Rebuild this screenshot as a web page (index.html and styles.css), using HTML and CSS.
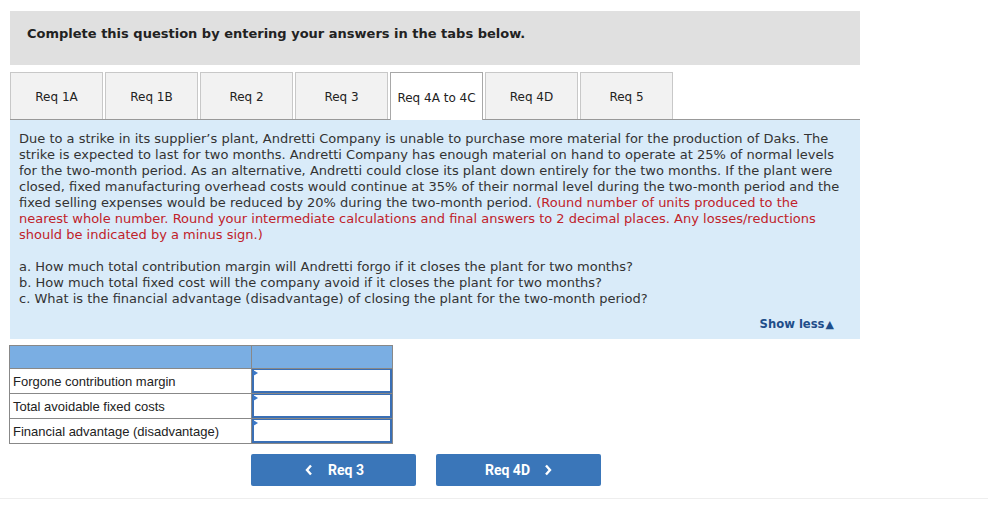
FILE: index.html
```html
<!doctype html>
<html lang="en">
<head>
	<meta charset="UTF-8">
	<title>Req 4A to 4C</title>
<link rel="stylesheet" href="styles.css">
</head>
<body>

<div class="page">
	<div class="intro">Complete this question by entering your answers in the tabs below.</div>

	<ul class="tabs">
		<li>Req 1A</li>
		<li>Req 1B</li>
		<li>Req 2</li>
		<li>Req 3</li>
		<li class="active">Req 4A to 4C</li>
		<li>Req 4D</li>
		<li>Req 5</li>
	</ul>

	<section class="question">
		<p>Due to a strike in its supplier’s plant, Andretti Company is unable to purchase more material for the production of Daks. The strike is expected to last for two months. Andretti Company has enough material on hand to operate at 25% of normal levels for the two-month period. As an alternative, Andretti could close its plant down entirely for the two months. If the plant were closed, fixed manufacturing overhead costs would continue at 35% of their normal level during the two-month period and the fixed selling expenses would be reduced by 20% during the two-month period. <span class="note">(Round number of units produced to the nearest whole number. Round your intermediate calculations and final answers to 2 decimal places. Any losses/reductions should be indicated by a minus sign.)</span></p>

		<ol class="parts">
			<li>a. How much total contribution margin will Andretti forgo if it closes the plant for two months?</li>
			<li>b. How much total fixed cost will the company avoid if it closes the plant for two months?</li>
			<li>c. What is the financial advantage (disadvantage) of closing the plant for the two-month period?</li>
		</ol>

		<div class="toggle"><a href="#">Show less<span class="caret">&#9650;</span></a></div>
	</section>

	<table class="answers">
		<tr class="head"><th></th><th></th></tr>
		<tr>
			<td class="label">Forgone contribution margin</td>
			<td class="cell"><input type="text"></td>
		</tr>
		<tr>
			<td class="label">Total avoidable fixed costs</td>
			<td class="cell"><input type="text"></td>
		</tr>
		<tr>
			<td class="label">Financial advantage (disadvantage)</td>
			<td class="cell"><input type="text"></td>
		</tr>
	</table>

	<div class="nav">
		<button class="prev"><svg class="chev" width="8" height="12" viewBox="0 0 8 12"><polyline points="6,1.5 2,6 6,10.5" fill="none" stroke="#fff" stroke-width="2.4"/></svg>Req 3</button>
		<button class="next">Req 4D<svg class="chev" width="8" height="12" viewBox="0 0 8 12"><polyline points="2,1.5 6,6 2,10.5" fill="none" stroke="#fff" stroke-width="2.4"/></svg></button>
	</div>
</div>

<div class="footer-line"></div>

</body>
</html>
```

FILE: styles.css
```css
body {
	margin: 0;
	font-family: "DejaVu Sans", Verdana, sans-serif;
	color: #333;
	background: #fff;
}
.page {
	padding: 11px 0 0 10px;
	width: 850px;
}
.intro {
	background: #e0e0e0;
	height: 54px;
	box-sizing: border-box;
	padding: 15px 17px 0;
	font-size: 13px;
	font-weight: bold;
	color: #222;
}

.tabs {
	list-style: none;
	margin: 7px 0 0 0;
	padding: 0;
	display: flex;
	gap: 2px;
	border-bottom: 1px solid #999;
	height: 47px;
}
.tabs li {
	width: 93px;
	box-sizing: border-box;
	height: 47px;
	padding-top: 2px;
	background: #f2f2f2;
	border: 1px solid #c8c8c8;
	border-bottom: 0;
	font-size: 12px;
	color: #222;
	display: flex;
	align-items: center;
	justify-content: center;
}
.tabs li.active {
	background: #fff;
	border-color: #a8a8a8;
	height: 48px;
}

.question {
	background: #d9ebf9;
	padding: 11px 9px 6px 9px;
	font-size: 13px;
	line-height: 16px;
	color: #333;
}
.question p {
	margin: 0;
}
.note {
	color: #c0222a;
}
.parts {
	list-style: none;
	margin: 16px 0 0 0;
	padding: 0;
}
.toggle {
	text-align: right;
	margin: 9px 17px 0 0;
	font-size: 11.6px;
	font-weight: bold;
}
.toggle a {
	color: #1f4e8a;
	text-decoration: none;
}
.caret {
	margin-left: 1px;
	font-size: 11px;
}

.answers {
	border-collapse: collapse;
	margin: 6px 0 0 -1px;
	font-family: "Liberation Sans", Arial, sans-serif;
	font-size: 13px;
	color: #222;
}
.answers td, .answers th {
	border: 1px solid #888;
	padding: 0;
}
.answers .head th {
	background: #7aaee3;
	height: 22px;
}
.answers th:first-child, .answers .label {
	width: 241px;
}
.answers .label {
	height: 25px;
	padding: 0 0 0 3px;
	box-sizing: border-box;
}
.answers .cell {
	width: 140px;
	position: relative;
}
.answers input {
	display: block;
	box-sizing: border-box;
	width: 140px;
	height: 24px;
	border: 2px solid #3a6fb5;
	border-top-width: 1px;
	margin: 0;
	background: #fff;
}
.answers .cell::before {
	content: "";
	position: absolute;
	left: 1px;
	top: 1px;
	border-left: 5px solid #3a78c8;
	border-top: 3px solid transparent;
	border-bottom: 3px solid transparent;
}

.nav {
	display: flex;
	gap: 20px;
	margin: 10px 0 0 241px;
}
.nav button {
	width: 165px;
	height: 32px;
	background: #3a76b9;
	color: #fff;
	border: 0;
	border-radius: 2px;
	font-family: Roboto, "Liberation Sans", sans-serif;
	font-weight: bold;
	font-size: 14px;
	display: flex;
	align-items: center;
	justify-content: center;
	gap: 15px;
	padding: 0;
}
.nav .prev {
	padding-left: 2px;
}
.nav .next {
	gap: 14px;
}

.footer-line {
	margin-top: 12px;
	border-top: 1px solid #eee;
}
```
